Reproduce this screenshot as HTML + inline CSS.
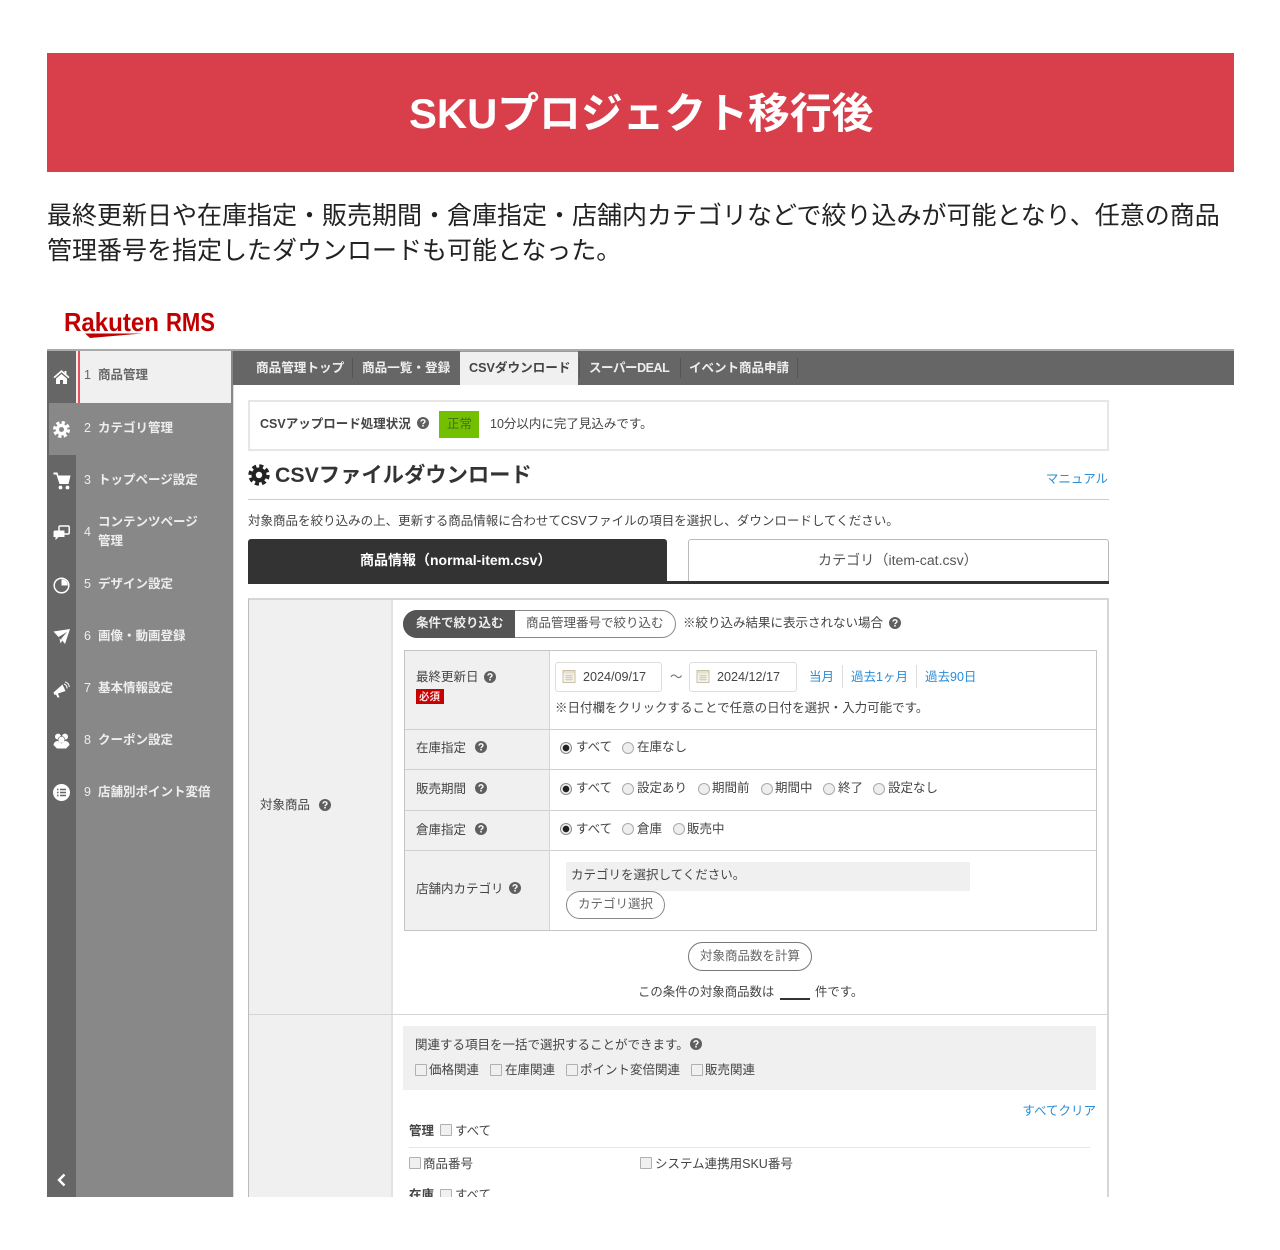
<!DOCTYPE html>
<html lang="ja"><head><meta charset="utf-8"><title>SKUプロジェクト移行後</title>
<style>
html,body{margin:0;padding:0;background:#fff}
body{width:1280px;height:1250px;position:relative;overflow:hidden;font-family:"Liberation Sans","Noto Sans CJK JP",sans-serif;color:#333}
div,span,svg{box-sizing:border-box}
.b{position:absolute}
.t{position:absolute;white-space:nowrap;line-height:16px;font-size:12.5px;color:#444;margin-top:1px}
.s{color:#eee;font-weight:700;font-size:12.5px}
.n{color:#eee;font-size:12.5px}
.l{color:#2a8dd6}
.h{font-weight:700;color:#eee}
.r{position:absolute;width:12px;height:12px;border-radius:50%;border:1px solid #aaa;background:#eee}
.r.on{background:radial-gradient(circle,#222 0 3px,#f4f4f4 3.6px);border-color:#888}
.c{position:absolute;width:12px;height:12px;border:1px solid #b0b0b0;background:#f0f0f0;border-radius:1px}
.q{position:absolute;width:12px;height:12px}
.i{position:absolute}
#shot{filter:blur(.35px)}
</style></head><body>
<svg width="0" height="0" style="position:absolute"><defs>
<symbol id="q" viewBox="0 0 12 12"><circle cx="6" cy="6" r="6" fill="#5f5f5f"/><path d="M4 4.6C4 3.4 4.9 2.8 6 2.8S8 3.5 8 4.5C8 5.8 6 5.8 6 7.2" fill="none" stroke="#fff" stroke-width="1.4"/><rect x="5.2" y="8" width="1.6" height="1.5" fill="#fff"/></symbol>
<symbol id="cal" viewBox="0 0 14 14"><rect x="1" y="1.5" width="12" height="12" fill="#f8f4e8" stroke="#c8c0a8"/><rect x="1.5" y="2" width="11" height="2.5" fill="#e6dfca"/><path d="M3 6.5h8M3 8.5h8M3 10.5h8M5 5.5v6.5M7 5.5v6.5M9 5.5v6.5" stroke="#c9c9c9" stroke-width=".7"/></symbol>
</defs></svg>

<!-- Banner -->
<div class="b" style="left:47px;top:53px;width:1187px;height:119px;background:#d83f4b"></div>
<div class="t" style="left:409px;top:88px;line-height:50px;font-size:41.8px;font-weight:700;color:#fff">SKUプロジェクト移行後</div>
<div class="t" style="left:47px;top:197px;line-height:36px;font-size:25px;color:#222">最終更新日や在庫指定・販売期間・倉庫指定・店舗内カテゴリなどで絞り込みが可能となり、任意の商品</div>
<div class="t" style="left:47px;top:232px;line-height:36px;font-size:25px;color:#222">管理番号を指定したダウンロードも可能となった。</div>

<!-- Logo -->
<svg class="i" style="left:60px;top:304px;filter:blur(.3px)" width="160" height="38" viewBox="0 0 160 38">
<text x="4" y="27" font-family="Liberation Sans" font-weight="700" font-size="26" fill="#c00000" textLength="95" lengthAdjust="spacingAndGlyphs">Rakuten</text>
<text x="106" y="27" font-family="Liberation Sans" font-weight="700" font-size="26" fill="#c00000" textLength="49" lengthAdjust="spacingAndGlyphs">RMS</text>
<path d="M25 29.5H82L30 34Z" fill="#c00000"/></svg>

<!-- Screenshot -->
<div id="shot" class="b" style="left:0;top:0;width:1280px;height:1197px;overflow:hidden">
<div class="b" style="left:47px;top:349px;width:1187px;height:2px;background:#aaa"></div>
<!-- Sidebar -->
<div class="b" style="left:47px;top:351px;width:29px;height:846px;background:#666"></div>
<div class="b" style="left:76px;top:351px;width:157px;height:846px;background:#888"></div>
<div class="b" style="left:233px;top:351px;width:1px;height:846px;background:#ddd"></div>
<div class="b" style="left:76px;top:351px;width:155px;height:52px;background:#f0f0f0"></div>
<div class="b" style="left:78px;top:351px;width:2px;height:52px;background:#e8505b"></div>
<div class="b" style="left:49px;top:403px;width:27px;height:52px;background:#888"></div>

<svg class="i" style="left:53px;top:369px" width="17" height="16" viewBox="0 0 17 16"><path d="M8.5 1L0.5 8L1.6 9.2L8.5 3.2L15.4 9.2L16.5 8L13.5 5.4V2H11.5V3.6Z" fill="#fff"/><path d="M3 9.6L8.5 5L14 9.6V15H10V11H7V15H3Z" fill="#fff"/></svg>
<svg class="i" style="left:53px;top:421px" width="17" height="17" viewBox="0 0 17 17"><circle cx="8.5" cy="8.5" r="5.8" fill="#fff"/><circle cx="8.5" cy="8.5" r="7" fill="none" stroke="#fff" stroke-width="3" stroke-dasharray="3.2 2.3"/><circle cx="8.5" cy="8.5" r="2.5" fill="#888"/></svg>
<svg class="i" style="left:53px;top:472px" width="18" height="18" viewBox="0 0 18 18"><path d="M0.5 0.5H4.5L5.3 3.5H17.5L15.5 12H6.5L3.4 2.5H0.5Z" fill="#fff"/><circle cx="7.5" cy="15.5" r="1.9" fill="#fff"/><circle cx="14.5" cy="15.5" r="1.9" fill="#fff"/></svg>
<svg class="i" style="left:53px;top:525px" width="17" height="16" viewBox="0 0 17 16"><rect x="6" y="1" width="10.2" height="8" rx="1.2" fill="none" stroke="#fff" stroke-width="1.5"/><path d="M1.5 5.5H11.5V12H5.5L2.5 15V12H0.5V6.5Z" fill="#fff"/></svg>
<svg class="i" style="left:53px;top:577px" width="17" height="17" viewBox="0 0 17 17"><circle cx="8.5" cy="8.5" r="7.3" fill="none" stroke="#fff" stroke-width="1.5"/><path d="M8.5 8.5V2.2A6.3 6.3 0 0 1 14.8 8.5Z" fill="#fff"/></svg>
<svg class="i" style="left:53px;top:629px" width="17" height="16" viewBox="0 0 17 16"><path d="M0.5 2.5L17 0L12 15L8 10L14 3L5.5 8Z" fill="#fff"/><path d="M6.5 9.5L7.5 14.5L9.2 11.5Z" fill="#fff"/></svg>
<svg class="i" style="left:53px;top:681px" width="17" height="17" viewBox="0 0 17 17"><path d="M0.5 11.5L9.5 3.5L12.5 10L5 12.5L6.5 16.5H4.5L3 13.5L1.5 14Z" fill="#fff"/><path d="M11 3A4 4 0 0 1 14 7.5M12 0.8A6 6 0 0 1 16.3 6" fill="none" stroke="#fff" stroke-width="1"/></svg>
<svg class="i" style="left:53px;top:733px" width="17" height="16" viewBox="0 0 17 16"><circle cx="5" cy="3.6" r="3" fill="#fff"/><circle cx="12" cy="3.6" r="3" fill="#fff"/><circle cx="8.5" cy="6.8" r="3.4" fill="#fff" stroke="#666" stroke-width=".6"/><path d="M0.5 12C1 9 3 8 5 8L8.5 10.5L12 8C14 8 16 9 16.5 12L13 15.5H4Z" fill="#fff"/></svg>
<svg class="i" style="left:53px;top:784px" width="17" height="17" viewBox="0 0 17 17"><circle cx="8.5" cy="8.5" r="8.5" fill="#fff"/><path d="M7 5.5H13M7 8.5H13M7 11.5H13M4 5.5H5.5M4 8.5H5.5M4 11.5H5.5" stroke="#666" stroke-width="1.4"/></svg>
<svg class="i" style="left:56px;top:1172px" width="11" height="16" viewBox="0 0 11 16"><path d="M8.5 2.5L3 8L8.5 13.5" fill="none" stroke="#fff" stroke-width="2.4"/></svg>

<div class="t" style="left:84px;top:366px;color:#666">1</div><div class="t" style="left:98px;top:366px;color:#666;font-weight:700">商品管理</div>
<div class="t n" style="left:84px;top:419px">2</div><div class="t s" style="left:98px;top:419px">カテゴリ管理</div>
<div class="t n" style="left:84px;top:471px">3</div><div class="t s" style="left:98px;top:471px">トップページ設定</div>
<div class="t n" style="left:84px;top:523px">4</div><div class="t s" style="left:98px;top:513px">コンテンツページ</div><div class="t s" style="left:98px;top:532px">管理</div>
<div class="t n" style="left:84px;top:575px">5</div><div class="t s" style="left:98px;top:575px">デザイン設定</div>
<div class="t n" style="left:84px;top:627px">6</div><div class="t s" style="left:98px;top:627px">画像・動画登録</div>
<div class="t n" style="left:84px;top:679px">7</div><div class="t s" style="left:98px;top:679px">基本情報設定</div>
<div class="t n" style="left:84px;top:731px">8</div><div class="t s" style="left:98px;top:731px">クーポン設定</div>
<div class="t n" style="left:84px;top:783px">9</div><div class="t s" style="left:98px;top:783px">店舗別ポイント変倍</div>

<!-- Top nav -->
<div class="b" style="left:233px;top:351px;width:1001px;height:34px;background:#666"></div>
<div class="b" style="left:460px;top:351px;width:118px;height:34px;background:#f0f0f0;border-top:1px solid #d98080"></div>
<div class="b" style="left:352px;top:358px;width:1px;height:20px;background:#555"></div>
<div class="b" style="left:579px;top:358px;width:1px;height:20px;background:#555"></div>
<div class="b" style="left:680px;top:358px;width:1px;height:20px;background:#555"></div>
<div class="b" style="left:797px;top:358px;width:1px;height:20px;background:#555"></div>
<div class="t h" style="left:256px;top:359px;font-size:12.6px">商品管理トップ</div>
<div class="t h" style="left:362px;top:359px;font-size:12.6px">商品一覧・登録</div>
<div class="t" style="left:469px;top:359px;font-weight:700;color:#444;font-size:12.6px">CSVダウンロード</div>
<div class="t h" style="left:589px;top:359px;letter-spacing:-.45px">スーパーDEAL</div>
<div class="t h" style="left:689px;top:359px">イベント商品申請</div>

<!-- Status -->
<div class="b" style="left:248px;top:400px;width:861px;height:51px;border:2px solid #e6e6e6"></div>
<div class="t" style="left:260px;top:415px;font-weight:700">CSVアップロード処理状況</div>
<svg class="q" style="left:417px;top:417px"><use href="#q"/></svg>
<div class="b" style="left:439px;top:411px;width:40px;height:27px;background:#73c000"></div>
<div class="t" style="left:447px;top:415px;color:#4a6a20">正常</div>
<div class="t" style="left:490px;top:415px">10分以内に完了見込みです。</div>

<!-- Heading -->
<svg class="i" style="left:248px;top:464px" width="22" height="22" viewBox="0 0 22 22"><circle cx="11" cy="11" r="7.5" fill="#222"/><circle cx="11" cy="11" r="9" fill="none" stroke="#222" stroke-width="3.4" stroke-dasharray="4 3.07"/><circle cx="11" cy="11" r="3.2" fill="#fff"/></svg>
<div class="t" style="left:275px;top:460px;line-height:28px;font-size:21.3px;font-weight:700;color:#333">CSVファイルダウンロード</div>
<div class="t l" style="right:172px;top:470px">マニュアル</div>
<div class="b" style="left:248px;top:499px;width:861px;height:1px;background:#ccc"></div>
<div class="t" style="left:248px;top:512px;font-size:12.52px">対象商品を絞り込みの上、更新する商品情報に合わせてCSVファイルの項目を選択し、ダウンロードしてください。</div>

<!-- Tabs -->
<div class="b" style="left:248px;top:539px;width:419px;height:43px;background:#333;border-radius:3px 3px 0 0"></div>
<div class="t" style="left:360px;top:551px;color:#fff;font-weight:700;font-size:14px">商品情報（normal-item.csv）</div>
<div class="b" style="left:688px;top:539px;width:421px;height:43px;background:#fff;border:1px solid #bbb;border-bottom:0;border-radius:3px 3px 0 0"></div>
<div class="b" style="left:248px;top:581px;width:861px;height:2.5px;background:#333"></div>
<div class="t" style="left:818px;top:551px;font-size:14.1px;color:#555">カテゴリ（item-cat.csv）</div>

<!-- Form outer -->
<div class="b" style="left:248px;top:598px;width:861px;height:620px;border:2px solid #d6d6d6;border-left:1px solid #bbb"></div>
<div class="b" style="left:249px;top:600px;width:144px;height:620px;background:#f0f0f0;border-right:2px solid #e2e2e2"></div>
<div class="b" style="left:249px;top:1014px;width:858px;height:1px;background:#d5d5d5"></div>
<div class="t" style="left:260px;top:796px">対象商品</div>
<svg class="q" style="left:319px;top:799px"><use href="#q"/></svg>

<!-- Toggle -->
<div class="b" style="left:403px;top:610px;width:273px;height:28px;border:1.5px solid #888;border-radius:14px;background:#fff"></div>
<div class="b" style="left:403px;top:610px;width:112px;height:28px;background:#555;border-radius:14px 0 0 14px"></div>
<div class="t" style="left:416px;top:614px;color:#eee;font-weight:700">条件で絞り込む</div>
<div class="t" style="left:526px;top:614px;color:#555">商品管理番号で絞り込む</div>
<div class="t" style="left:683px;top:614px">※絞り込み結果に表示されない場合</div>
<svg class="q" style="left:889px;top:617px"><use href="#q"/></svg>

<!-- Inner table -->
<div class="b" style="left:404px;top:650px;width:693px;height:281px;border:1px solid #c4c4c4"></div>
<div class="b" style="left:405px;top:651px;width:145px;height:279px;background:#f0f0f0;border-right:1px solid #d5d5d5"></div>
<div class="b" style="left:405px;top:729px;width:691px;height:1px;background:#d0d0d0"></div>
<div class="b" style="left:405px;top:769px;width:691px;height:1px;background:#d0d0d0"></div>
<div class="b" style="left:405px;top:810px;width:691px;height:1px;background:#d0d0d0"></div>
<div class="b" style="left:405px;top:850px;width:691px;height:1px;background:#d0d0d0"></div>

<div class="t" style="left:416px;top:668px">最終更新日</div>
<svg class="q" style="left:484px;top:671px"><use href="#q"/></svg>
<div class="b" style="left:416px;top:689px;width:28px;height:15px;background:#c80000"></div>
<div class="t" style="left:419px;top:688px;color:#fbdcdc;font-size:10.5px;font-weight:700">必須</div>
<div class="t" style="left:416px;top:739px">在庫指定</div><svg class="q" style="left:475px;top:741px"><use href="#q"/></svg>
<div class="t" style="left:416px;top:780px">販売期間</div><svg class="q" style="left:475px;top:782px"><use href="#q"/></svg>
<div class="t" style="left:416px;top:821px">倉庫指定</div><svg class="q" style="left:475px;top:823px"><use href="#q"/></svg>
<div class="t" style="left:416px;top:880px">店舗内カテゴリ</div><svg class="q" style="left:509px;top:882px"><use href="#q"/></svg>

<!-- Dates -->
<div class="b" style="left:555px;top:662px;width:107px;height:30px;border:1px solid #ddd;border-radius:3px"></div>
<svg class="i" style="left:562px;top:669px" width="14" height="14"><use href="#cal"/></svg>
<div class="t" style="left:583px;top:668px;font-size:12.6px">2024/09/17</div>
<div class="t" style="left:670px;top:668px;color:#666">～</div>
<div class="b" style="left:689px;top:662px;width:108px;height:30px;border:1px solid #ddd;border-radius:3px"></div>
<svg class="i" style="left:696px;top:669px" width="14" height="14"><use href="#cal"/></svg>
<div class="t" style="left:717px;top:668px;font-size:12.6px">2024/12/17</div>
<div class="t l" style="left:809px;top:668px">当月</div>
<div class="b" style="left:842px;top:665px;width:1px;height:23px;background:#ddd"></div>
<div class="t l" style="left:851px;top:668px">過去1ヶ月</div>
<div class="b" style="left:916px;top:665px;width:1px;height:23px;background:#ddd"></div>
<div class="t l" style="left:925px;top:668px">過去90日</div>
<div class="t" style="left:555px;top:699px">※日付欄をクリックすることで任意の日付を選択・入力可能です。</div>

<!-- Radios -->
<span class="r on" style="left:560px;top:742px"></span><div class="t" style="left:576px;top:738px">すべて</div>
<span class="r" style="left:622px;top:742px"></span><div class="t" style="left:637px;top:738px">在庫なし</div>

<span class="r on" style="left:560px;top:783px"></span><div class="t" style="left:576px;top:779px">すべて</div>
<span class="r" style="left:622px;top:783px"></span><div class="t" style="left:637px;top:779px">設定あり</div>
<span class="r" style="left:698px;top:783px"></span><div class="t" style="left:712px;top:779px">期間前</div>
<span class="r" style="left:761px;top:783px"></span><div class="t" style="left:775px;top:779px">期間中</div>
<span class="r" style="left:823px;top:783px"></span><div class="t" style="left:838px;top:779px">終了</div>
<span class="r" style="left:873px;top:783px"></span><div class="t" style="left:888px;top:779px">設定なし</div>

<span class="r on" style="left:560px;top:823px"></span><div class="t" style="left:576px;top:820px">すべて</div>
<span class="r" style="left:622px;top:823px"></span><div class="t" style="left:637px;top:820px">倉庫</div>
<span class="r" style="left:673px;top:823px"></span><div class="t" style="left:687px;top:820px">販売中</div>

<!-- Category -->
<div class="b" style="left:566px;top:862px;width:404px;height:29px;background:#f0f0f0"></div>
<div class="t" style="left:571px;top:866px">カテゴリを選択してください。</div>
<div class="b" style="left:566px;top:891px;width:99px;height:28px;border:1px solid #888;border-radius:14px;background:#fff"></div>
<div class="t" style="left:578px;top:895px;color:#666">カテゴリ選択</div>

<!-- Calc -->
<div class="b" style="left:688px;top:942px;width:124px;height:29px;border:1px solid #777;border-radius:14.5px;background:#fff"></div>
<div class="t" style="left:700px;top:947px;color:#666">対象商品数を計算</div>
<div class="t" style="left:638px;top:983px;font-size:12.4px">この条件の対象商品数は</div>
<div class="b" style="left:780px;top:998px;width:30px;height:1.5px;background:#333"></div>
<div class="t" style="left:815px;top:983px;font-size:12.4px">件です。</div>

<!-- Bulk -->
<div class="b" style="left:403px;top:1026px;width:693px;height:64px;background:#f0f0f0"></div>
<div class="t" style="left:415px;top:1036px">関連する項目を一括で選択することができます。</div>
<svg class="q" style="left:690px;top:1038px"><use href="#q"/></svg>
<span class="c" style="left:415px;top:1064px"></span><div class="t" style="left:429px;top:1061px">価格関連</div>
<span class="c" style="left:490px;top:1064px"></span><div class="t" style="left:505px;top:1061px">在庫関連</div>
<span class="c" style="left:566px;top:1064px"></span><div class="t" style="left:580px;top:1061px">ポイント変倍関連</div>
<span class="c" style="left:691px;top:1064px"></span><div class="t" style="left:705px;top:1061px">販売関連</div>
<div class="t l" style="right:184px;top:1102px">すべてクリア</div>

<div class="t" style="left:409px;top:1122px;font-weight:700">管理</div>
<span class="c" style="left:440px;top:1124px"></span><div class="t" style="left:455px;top:1122px">すべて</div>
<div class="b" style="left:409px;top:1147px;width:681px;height:1px;background:#e6e6e6"></div>
<span class="c" style="left:409px;top:1157px"></span><div class="t" style="left:423px;top:1155px">商品番号</div>
<span class="c" style="left:640px;top:1157px"></span><div class="t" style="left:655px;top:1155px">システム連携用SKU番号</div>
<div class="t" style="left:409px;top:1186px;font-weight:700">在庫</div>
<span class="c" style="left:440px;top:1189px"></span><div class="t" style="left:455px;top:1186px">すべて</div>
</div>
</body></html>
